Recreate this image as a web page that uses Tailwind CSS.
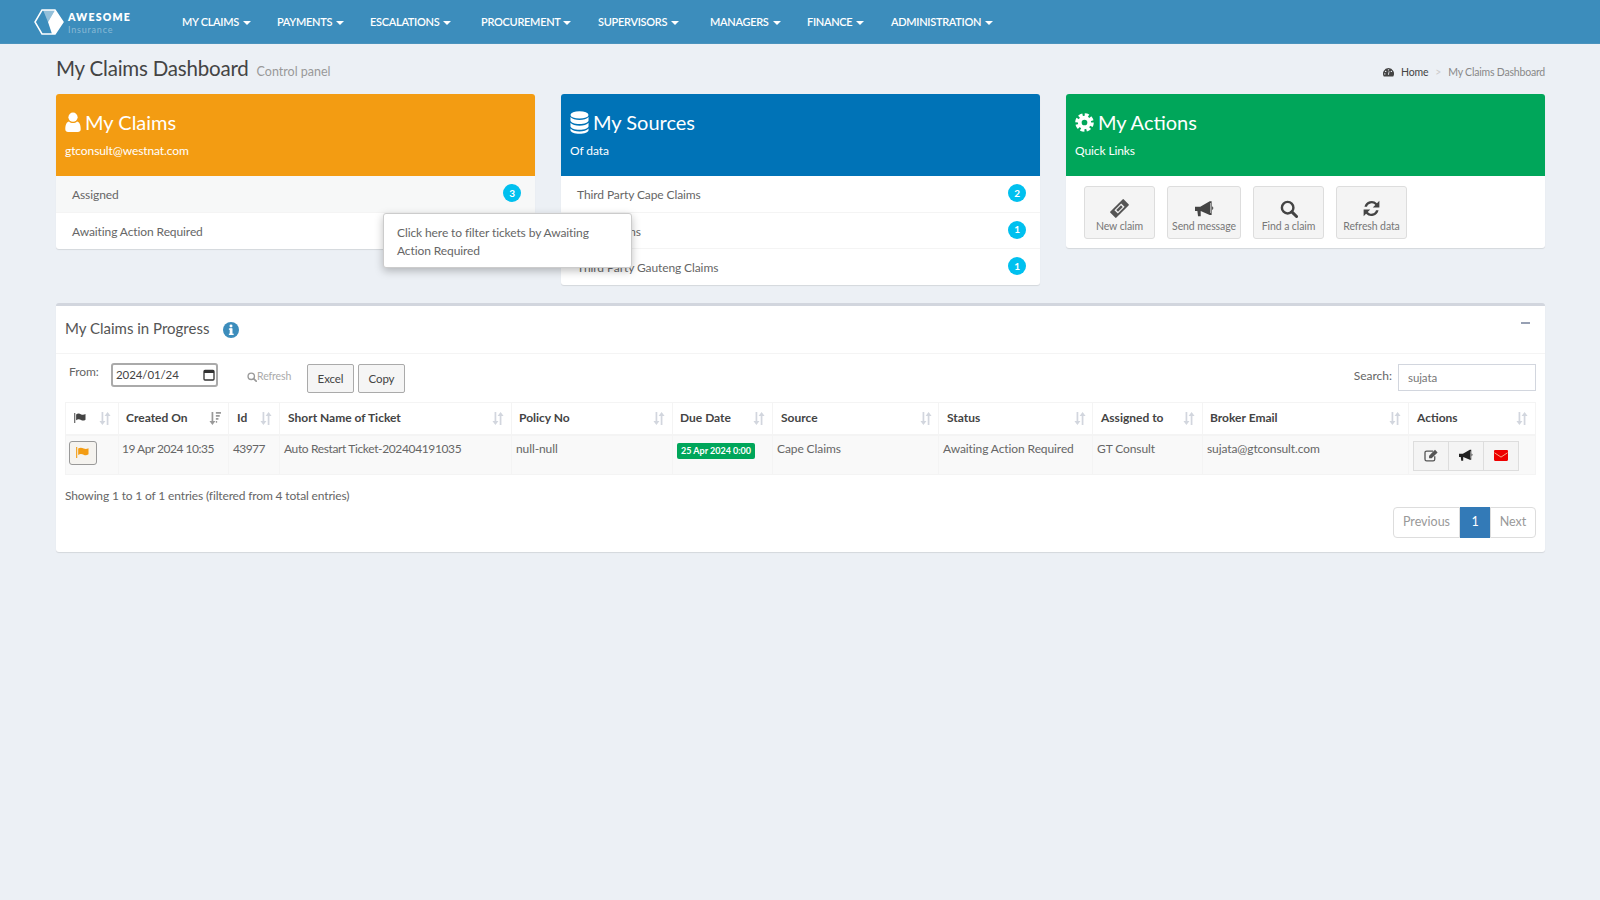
<!DOCTYPE html>
<html lang="en">
<head>
    <meta charset="utf-8" />
    <meta name="viewport" content="width=device-width, initial-scale=1" />
    <title>My Claims Dashboard</title>
    <script src="https://cdn.jsdelivr.net/npm/@tailwindcss/browser@4"></script>
</head>
<body class="h-[900px] overflow-hidden bg-[#ecf0f5] text-[#666] text-[12px] tracking-[-0.1px] font-['Lato','Noto_Sans',sans-serif]">

    <!-- icon set -->
    <svg class="hidden">
        <symbol id="i-user" viewBox="0 0 16 20"><circle cx="8" cy="5.2" r="4.6" fill="currentColor"/><path d="M0.3 17.2C0.3 12.5 1.8 10 4 9.6c1 1 2.5 1.5 4 1.5s3-.5 4-1.5c2.2.4 3.7 2.9 3.7 7.6 0 1.7-1.2 2.8-2.8 2.8H3.1C1.5 20 .3 18.9.3 17.2z" fill="currentColor"/></symbol>
        <symbol id="i-db" viewBox="0 0 20 24" fill="currentColor"><ellipse cx="10" cy="4" rx="9.5" ry="3.8"/><path d="M.5 6.2C2 8.3 6 9.3 10 9.3s8-1 9.5-3.1V10c0 2-4.2 3.7-9.5 3.7S.5 12 .5 10z"/><path d="M.5 12.3c1.5 2.1 5.5 3.1 9.500 3.100s8-1 9.500-3.100V16c0 2-4.200 3.700-9.500 3.700S.5 18 .5 16z"/><path d="M.5 18.300c1.500 2.100 5.500 3.100 9.500 3.100s8-1 9.500-3.100v1.800c0 2-4.200 3.700-9.500 3.700S.5 22.100.5 20.100z"/></symbol>
        <symbol id="i-cog" viewBox="0 0 20 20" fill="none" stroke="currentColor"><circle cx="10" cy="10" r="5" stroke-width="4"/><circle cx="10" cy="10" r="8" stroke-width="3.6" stroke-dasharray="4.1 2.18"/></symbol>
        <symbol id="i-ticket" viewBox="0 0 20 20"><g transform="rotate(-45 10 10)"><rect x="0" y="5.5" width="20" height="9" rx="1" fill="currentColor"/><rect x="5" y="7.5" width="10" height="5" fill="#f4f4f4"/><rect x="6.5" y="8.7" width="7" height="2.6" fill="currentColor"/></g></symbol>
        <symbol id="i-horn" viewBox="0 0 20 18" fill="currentColor"><path d="M0 6.5h5.500L15.500.8h2v14.400h-2L6 11v5.500H3.200L2.500 11H0z"/><path d="M15.800 2.800v10.400h.6V2.800z" fill="#f4f4f4"/><path d="M18 6a2.200 2.200 0 0 1 0 4z"/></symbol>
        <symbol id="i-search" viewBox="0 0 20 20" fill="none" stroke="currentColor"><circle cx="8.500" cy="8.500" r="6.400" stroke-width="2.700"/><path d="M13.200 13.200l5.200 5.200" stroke-width="3.300" stroke-linecap="round"/></symbol>
        <symbol id="i-refresh" viewBox="0 0 20 20" fill="currentColor"><path d="M3.300 8.300A7 7 0 0 1 15.200 5L17.500 2.700V9h-6.300l2.400-2.400A4.700 4.700 0 0 0 5.700 8.300z"/><path d="M16.700 11.700A7 7 0 0 1 4.800 15L2.500 17.300V11h6.300l-2.400 2.400a4.700 4.700 0 0 0 7.900-1.700z"/></symbol>
        <symbol id="i-gauge" viewBox="0 0 20 16" fill="currentColor"><path d="M10 0a10 10 0 0 0-8.600 15.200h17.200A10 10 0 0 0 10 0z"/><circle cx="10" cy="3.200" r="1.300" fill="#ecf0f5"/><circle cx="4.800" cy="6" r="1.300" fill="#ecf0f5"/><circle cx="15.200" cy="6" r="1.300" fill="#ecf0f5"/><circle cx="3.300" cy="10.500" r="1.300" fill="#ecf0f5"/><path d="M9 12l1.500-6.500 1.300.3-1 6.500z" fill="#ecf0f5"/></symbol>
        <symbol id="i-flag" viewBox="0 0 20 16" fill="currentColor"><path d="M0 0h1.600v16H0z"/><path d="M3 2.200c3-2 5.500-1.300 8 0 2.500 1 4.500.8 7-.5v9c-2.500 1.800-5 1.800-7 .6-2.500-1.300-5-1.800-8 .2z"/></symbol>
        <symbol id="i-sort" viewBox="0 0 14 15" fill="currentColor"><path d="M3 0h2v10.500h2.500L4 15 .5 10.500H3z"/><path d="M9 15h2V4.500h2.500L10 0 6.500 4.500H9z"/></symbol>
        <symbol id="i-sortd" viewBox="0 0 14 15" fill="currentColor"><path d="M3 0h2v10.500h2.500L4 15 .5 10.500H3z"/><path d="M8 0h6v2H8zM8 3.500h4.500v2H8zM8 7h3v2H8zM8 10.500h1.500v2H8z"/></symbol>
        <symbol id="i-edit" viewBox="0 0 18 16"><path d="M13 9v3.500a2 2 0 0 1-2 2H3a2 2 0 0 1-2-2V4.500a2 2 0 0 1 2-2h8" fill="none" stroke="currentColor" stroke-width="1.600"/><path d="M6 11.500V8.300L13.300 1l3.200 3.200L9.200 11.500z" fill="currentColor"/></symbol>
    </svg>

    <!-- top nav -->
    <nav class="h-[44px] bg-[#3c8dbc] border-b border-b-[#4a93bd] flex items-center text-white text-[11px] tracking-[-0.3px] font-semibold">
        <div class="w-[182px] pl-[34px] flex items-center gap-[4px] shrink-0">
            <svg class="w-[30px] h-[26px]" viewBox="0 0 30 26">
                <path d="M8 1h13l8 12-8 12H8L1 13z" fill="none" stroke="#fff" stroke-width="1.500"/>
                <path d="M21 1l8 12-8 12h-3l-4-12z" fill="#fff"/>
                <path d="M9 1h12l-7 12z" fill="#fff" fill-opacity=".45"/>
            </svg>
            <div class="leading-none mt-[3px]">
                <div class="text-[10.500px] font-extrabold tracking-[1.200px]">AWESOME</div>
                <div class="text-[9px] font-normal tracking-[0.800px] text-white/40 mt-[3px]">Insurance</div>
            </div>
        </div>
        <a class="w-[95px] shrink-0 pt-[1px]">MY CLAIMS<span class="inline-block align-middle ml-[4px] border-t-4 border-x-4 border-x-transparent border-t-white"></span></a>
        <a class="w-[93px] shrink-0 pt-[1px]">PAYMENTS<span class="inline-block align-middle ml-[4px] border-t-4 border-x-4 border-x-transparent border-t-white"></span></a>
        <a class="w-[111px] shrink-0 pt-[1px]">ESCALATIONS<span class="inline-block align-middle ml-[4px] border-t-4 border-x-4 border-x-transparent border-t-white"></span></a>
        <a class="w-[117px] shrink-0 pt-[1px]">PROCUREMENT<span class="inline-block align-middle ml-[2px] border-t-4 border-x-4 border-x-transparent border-t-white"></span></a>
        <a class="w-[112px] shrink-0 pt-[1px]">SUPERVISORS<span class="inline-block align-middle ml-[4px] border-t-4 border-x-4 border-x-transparent border-t-white"></span></a>
        <a class="w-[97px] shrink-0 pt-[1px]">MANAGERS<span class="inline-block align-middle ml-[4px] border-t-4 border-x-4 border-x-transparent border-t-white"></span></a>
        <a class="w-[84px] shrink-0 pt-[1px]">FINANCE<span class="inline-block align-middle ml-[4px] border-t-4 border-x-4 border-x-transparent border-t-white"></span></a>
        <a class="shrink-0 pt-[1px]">ADMINISTRATION<span class="inline-block align-middle ml-[4px] border-t-4 border-x-4 border-x-transparent border-t-white"></span></a>
    </nav>

    <main class="pl-[56px] pr-[55px]">
        <!-- page title -->
        <div class="h-[50px] flex items-center justify-between">
            <div class="flex items-baseline gap-[8px] -mt-[2px]">
                <h1 class="text-[20.500px] tracking-[-0.2px] text-[#444]">My Claims Dashboard</h1>
                <span class="text-[12.500px] tracking-normal text-[#999]">Control panel</span>
            </div>
            <div class="flex items-center text-[10.500px] tracking-[-0.2px] text-[#888] mt-[7px]">
                <svg class="w-[11px] h-[9px] text-[#444] mr-[6px]"><use href="#i-gauge"/></svg>
                <span class="text-[#444] mr-[7px] ml-[1px]">Home</span>
                <span class="text-[#ccc] mr-[7px]">&gt;</span>
                <span>My Claims Dashboard</span>
            </div>
        </div>

        <!-- the three widget cards -->
        <div class="relative grid grid-cols-3 gap-[26px] items-start">
            <section class="bg-white rounded-[3px] shadow-[0_1px_1px_rgba(0,0,0,0.1)]">
                <header class="h-[82px] bg-[#f39c12] rounded-t-[3px] text-white pl-[9px] pt-[14px]">
                    <div class="flex items-center gap-[4px] h-[28px] text-[20px] tracking-normal">
                        <svg class="w-[16px] h-[20px]"><use href="#i-user"/></svg>My Claims
                    </div>
                    <div class="mt-[6px] text-[12px]">gtconsult@westnat.com</div>
                </header>
                <div class="h-[37px] bg-[#f7f8f8] border-b border-[#f4f4f4] pl-[16px] pr-[14px] flex items-center justify-between">
                    <span class="pt-[2px]">Assigned</span>
                    <span class="w-[18px] h-[18px] -mt-[2px] rounded-full bg-[#00c0ef] text-white text-[10px] font-bold flex items-center justify-center">3</span>
                </div>
                <div class="h-[36px] pl-[16px] pt-[2px] flex items-center">Awaiting Action Required</div>
            </section>

            <section class="bg-white rounded-[3px] shadow-[0_1px_1px_rgba(0,0,0,0.1)]">
                <header class="h-[82px] bg-[#0073b7] rounded-t-[3px] text-white pl-[9px] pt-[14px]">
                    <div class="flex items-center gap-[4px] h-[28px] text-[20px] tracking-normal">
                        <svg class="w-[19px] h-[23px]"><use href="#i-db"/></svg>My Sources
                    </div>
                    <div class="mt-[6px] text-[12px]">Of data</div>
                </header>
                <div class="h-[37px] border-b border-[#f4f4f4] pl-[16px] pr-[14px] flex items-center justify-between">
                    <span class="pt-[2px]">Third Party Cape Claims</span>
                    <span class="w-[18px] h-[18px] -mt-[2px] rounded-full bg-[#00c0ef] text-white text-[10px] font-bold flex items-center justify-center">2</span>
                </div>
                <div class="h-[36px] border-b border-[#f4f4f4] pr-[14px] flex items-center justify-end">
                    <span class="w-[18px] h-[18px] -mt-[2px] rounded-full bg-[#00c0ef] text-white text-[10px] font-bold flex items-center justify-center">1</span>
                </div>
                <div class="h-[36px] pl-[16px] pr-[14px] flex items-center justify-between">
                    <span class="pt-[2px]">Third Party Gauteng Claims</span>
                    <span class="w-[18px] h-[18px] -mt-[2px] rounded-full bg-[#00c0ef] text-white text-[10px] font-bold flex items-center justify-center">1</span>
                </div>
            </section>

            <section class="bg-white rounded-[3px] shadow-[0_1px_1px_rgba(0,0,0,0.1)]">
                <header class="h-[82px] bg-[#00a65a] rounded-t-[3px] text-white pl-[9px] pt-[14px]">
                    <div class="flex items-center gap-[4px] h-[28px] text-[20px] tracking-normal">
                        <svg class="w-[19px] h-[19px]"><use href="#i-cog"/></svg>My Actions
                    </div>
                    <div class="mt-[6px] text-[12px]">Quick Links</div>
                </header>
                <div class="h-[72px] pl-[18px] pt-[10px] flex gap-[12px] text-[10.500px] text-[#777]">
                    <a class="w-[71px] h-[53px] bg-[#f4f4f4] border border-[#ddd] rounded-[3px] flex flex-col items-center pt-[12px]">
                        <svg class="w-[19px] h-[19px] text-[#555]"><use href="#i-ticket"/></svg><span class="mt-[1px]">New claim</span>
                    </a>
                    <a class="w-[74px] h-[53px] bg-[#f4f4f4] border border-[#ddd] rounded-[3px] flex flex-col items-center pt-[13px]">
                        <svg class="w-[19px] h-[18px] text-[#444]"><use href="#i-horn"/></svg><span class="mt-[1px]">Send message</span>
                    </a>
                    <a class="w-[71px] h-[53px] bg-[#f4f4f4] border border-[#ddd] rounded-[3px] flex flex-col items-center pt-[13px]">
                        <svg class="w-[18px] h-[18px] text-[#444]"><use href="#i-search"/></svg><span class="mt-[1px]">Find a claim</span>
                    </a>
                    <a class="w-[71px] h-[53px] bg-[#f4f4f4] border border-[#ddd] rounded-[3px] flex flex-col items-center pt-[11px]">
                        <svg class="w-[21px] h-[21px] text-[#444]"><use href="#i-refresh"/></svg><span>Refresh data</span>
                    </a>
                </div>
            </section>

            <!-- second source row is mostly under the tooltip, as in the screenshot -->
            <span class="absolute left-[521px] top-[129px] leading-[18px]">Cape Claims</span>

            <!-- tooltip over the cards -->
            <div class="absolute left-[327px] top-[119px] w-[249px] h-[55px] bg-white border border-[#ccc] rounded-[3px] shadow-[0_3px_8px_rgba(0,0,0,0.25)] pl-[13px] pr-[20px] pt-[10px] leading-[18px] text-[#666]">
                Click here to filter tickets by Awaiting Action Required
            </div>
        </div>

        <!-- claims in progress -->
        <section class="mt-[18px] h-[249px] bg-white border-t-[3px] border-[#d2d6de] rounded-[3px] shadow-[0_1px_1px_rgba(0,0,0,0.1)]">
            <div class="h-[48px] border-b border-[#f4f4f4] pl-[9px] pr-[15px] flex items-center justify-between">
                <div class="flex items-center gap-[14px] text-[15px] tracking-normal text-[#555] -mt-[3px]">
                    My Claims in Progress
                    <svg class="w-[16px] h-[16px] mt-[3px]" viewBox="0 0 15 15"><circle cx="7.5" cy="7.5" r="7.5" fill="#3c8dbc"/><rect x="6.3" y="6" width="2.6" height="6" fill="#fff"/><rect x="5.5" y="6" width="3" height="1.3" fill="#fff"/><rect x="5.5" y="10.9" width="4.5" height="1.3" fill="#fff"/><circle cx="7.5" cy="3.8" r="1.4" fill="#fff"/></svg>
                </div>
                <div class="w-[9px] h-[2px] bg-[#97a0b3] -mt-[13px]"></div>
            </div>

            <div class="px-[9px]">
                <!-- filters row -->
                <div class="h-[48px] flex items-start">
                    <label class="ml-[4px] mt-[9px] w-[42px] shrink-0">From:</label>
                    <div class="mt-[9px] w-[107px] h-[24px] border-2 border-[#aaa] rounded-[3px] pl-[3px] pr-[1px] flex items-center justify-between text-[11.500px] tracking-[-0.1px] text-[#444] shrink-0">
                        2024/01/24
                        <svg class="w-[12px] h-[12px]" viewBox="0 0 12 12"><rect x="1" y="1.5" width="10" height="9.5" rx="1" fill="none" stroke="#333" stroke-width="1.3"/><rect x="1" y="1.5" width="10" height="2.5" fill="#333"/></svg>
                    </div>
                    <div class="ml-[29px] mt-[15px] w-[60px] shrink-0 flex items-center text-[10.500px] text-[#aaa]">
                        <svg class="w-[10px] h-[10px] text-[#999]"><use href="#i-search"/></svg>Refresh
                    </div>
                    <button class="mt-[10px] w-[47px] h-[29px] border border-[#aaa] rounded-[2px] bg-[#f5f5f5] text-[11.500px] text-[#444]">Excel</button>
                    <button class="ml-[4px] mt-[10px] w-[47px] h-[29px] border border-[#aaa] rounded-[2px] bg-[#f5f5f5] text-[11.500px] text-[#444]">Copy</button>
                    <label class="ml-auto mt-[13px] mr-[6px] tracking-normal">Search:</label>
                    <div class="mt-[10px] w-[138px] h-[27px] border border-[#d2d6de] pl-[9px] flex items-center text-[11.500px] text-[#777]">sujata</div>
                </div>

                <!-- table -->
                <table class="w-[1470px] table-fixed border-collapse">
                    <colgroup>
                        <col class="w-[53px]" /><col class="w-[110px]" /><col class="w-[51px]" /><col class="w-[232px]" /><col class="w-[161px]" /><col class="w-[100px]" /><col class="w-[166px]" /><col class="w-[154px]" /><col class="w-[110px]" /><col class="w-[206px]" /><col class="w-[127px]" />
                    </colgroup>
                    <thead class="text-[#444] text-[12px] tracking-normal font-bold">
                        <tr class="h-[32px] border-b-2 border-[#f4f4f4]">
                            <th class="border border-[#f4f4f4] pl-[8px] pr-[7px]"><div class="flex items-center justify-between"><svg class="w-[13px] h-[10px] text-[#444]"><use href="#i-flag"/></svg><svg class="w-[12px] h-[13px] text-[#d2d6de]"><use href="#i-sort"/></svg></div></th>
                            <th class="border border-[#f4f4f4] pl-[7px] pr-[7px]"><div class="flex items-center justify-between">Created On<svg class="w-[12px] h-[13px] text-[#999]"><use href="#i-sortd"/></svg></div></th>
                            <th class="border border-[#f4f4f4] pl-[8px] pr-[7px]"><div class="flex items-center justify-between">Id<svg class="w-[12px] h-[13px] text-[#d2d6de]"><use href="#i-sort"/></svg></div></th>
                            <th class="border border-[#f4f4f4] pl-[8px] pr-[7px]"><div class="flex items-center justify-between">Short Name of Ticket<svg class="w-[12px] h-[13px] text-[#d2d6de]"><use href="#i-sort"/></svg></div></th>
                            <th class="border border-[#f4f4f4] pl-[7px] pr-[7px]"><div class="flex items-center justify-between">Policy No<svg class="w-[12px] h-[13px] text-[#d2d6de]"><use href="#i-sort"/></svg></div></th>
                            <th class="border border-[#f4f4f4] pl-[7px] pr-[7px]"><div class="flex items-center justify-between">Due Date<svg class="w-[12px] h-[13px] text-[#d2d6de]"><use href="#i-sort"/></svg></div></th>
                            <th class="border border-[#f4f4f4] pl-[8px] pr-[6px]"><div class="flex items-center justify-between">Source<svg class="w-[12px] h-[13px] text-[#d2d6de]"><use href="#i-sort"/></svg></div></th>
                            <th class="border border-[#f4f4f4] pl-[8px] pr-[6px]"><div class="flex items-center justify-between">Status<svg class="w-[12px] h-[13px] text-[#d2d6de]"><use href="#i-sort"/></svg></div></th>
                            <th class="border border-[#f4f4f4] pl-[8px] pr-[7px]"><div class="flex items-center justify-between">Assigned to<svg class="w-[12px] h-[13px] text-[#d2d6de]"><use href="#i-sort"/></svg></div></th>
                            <th class="border border-[#f4f4f4] pl-[7px] pr-[7px]"><div class="flex items-center justify-between">Broker Email<svg class="w-[12px] h-[13px] text-[#d2d6de]"><use href="#i-sort"/></svg></div></th>
                            <th class="border border-[#f4f4f4] pl-[8px] pr-[7px]"><div class="flex items-center justify-between">Actions<svg class="w-[12px] h-[13px] text-[#d2d6de]"><use href="#i-sort"/></svg></div></th>
                        </tr>
                    </thead>
                    <tbody class="text-left leading-[18px]">
                        <tr class="h-[40px] bg-[#f9f9f9] align-top">
                            <td class="border border-[#f4f4f4] pl-[3px] pt-[5px]">
                                <div class="w-[28px] h-[24px] border border-[#999] rounded-[3px] bg-[#f5f3ef] flex items-center justify-center">
                                    <svg class="w-[14px] h-[11px] text-[#f39c12]"><use href="#i-flag"/></svg>
                                </div>
                            </td>
                            <td class="border border-[#f4f4f4] pl-[3px] pt-[4px] tracking-[-0.5px] whitespace-nowrap">19 Apr 2024 10:35</td>
                            <td class="border border-[#f4f4f4] pl-[4px] pt-[4px] tracking-[-0.6px]">43977</td>
                            <td class="border border-[#f4f4f4] pl-[4px] pt-[4px] tracking-[-0.37px]">Auto Restart Ticket-202404191035</td>
                            <td class="border border-[#f4f4f4] pl-[4px] pt-[4px]">null-null</td>
                            <td class="border border-[#f4f4f4] pl-[4px] pt-[5px]">
                                <span class="inline-block w-[78px] h-[16px] leading-[16px] text-center bg-[#00a65a] rounded-[2px] text-white text-[9px] tracking-normal font-bold">25 Apr 2024 0:00</span>
                            </td>
                            <td class="border border-[#f4f4f4] pl-[4px] pt-[4px]">Cape Claims</td>
                            <td class="border border-[#f4f4f4] pl-[4px] pt-[4px]">Awaiting Action Required</td>
                            <td class="border border-[#f4f4f4] pl-[4px] pt-[4px]">GT Consult</td>
                            <td class="border border-[#f4f4f4] pl-[4px] pt-[4px]">sujata@gtconsult.com</td>
                            <td class="border border-[#f4f4f4] pl-[4px] pt-[5px]">
                                <div class="flex w-[106px] h-[30px] border border-[#ddd] bg-[#f4f4f4]">
                                    <div class="flex-1 flex items-center justify-center border-r border-[#ddd]"><svg class="w-[15px] h-[13px] text-[#555]"><use href="#i-edit"/></svg></div>
                                    <div class="flex-1 flex items-center justify-center border-r border-[#ddd]"><svg class="w-[14px] h-[13px] text-[#222]"><use href="#i-horn"/></svg></div>
                                    <div class="flex-1 flex items-center justify-center">
                                        <svg class="w-[14px] h-[11px]" viewBox="0 0 13 10"><rect width="13" height="10" rx="1" fill="#ee0000"/><path d="M0.5 2.5L6.5 6.5L12.5 2.5" fill="none" stroke="#f5c9a0" stroke-width=".8"/></svg>
                                    </div>
                                </div>
                            </td>
                        </tr>
                    </tbody>
                </table>

                <!-- footer -->
                <div class="flex justify-between items-start">
                    <div class="mt-[12px] tracking-[-0.15px]">Showing 1 to 1 of 1 entries (filtered from 4 total entries)</div>
                    <div class="mt-[32px] h-[31px] flex text-[12.5px] tracking-normal text-[#999]">
                        <a class="w-[67px] border border-[#ddd] rounded-l-[4px] flex items-center justify-center">Previous</a>
                        <a class="w-[30px] bg-[#337ab7] text-white flex items-center justify-center">1</a>
                        <a class="w-[46px] border border-[#ddd] rounded-r-[4px] flex items-center justify-center">Next</a>
                    </div>
                </div>
            </div>
        </section>
    </main>

</body>
</html>
